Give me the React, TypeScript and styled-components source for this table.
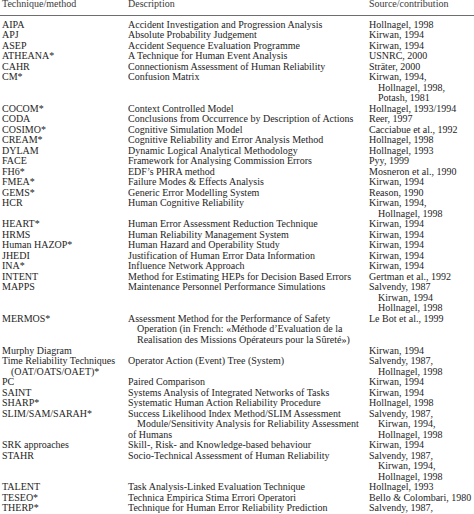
import styled, { createGlobalStyle } from 'styled-components';

const GlobalStyle = createGlobalStyle`
  html, body {
    margin: 0;
    padding: 0;
    background: #fff;
    overflow: hidden;
  }
`;

const Table = styled.div`
  width: 474px;
  height: 514px;
  overflow: hidden;
  font-family: "Liberation Serif", "Times New Roman", serif;
  font-size: 10px;
  line-height: 10.52px;
  color: #1e1e1e;
  white-space: nowrap;
`;

const Row = styled.div<{ $head?: boolean }>`
  display: grid;
  grid-template-columns: 126px 241px 1fr;
  padding-left: 2px;

  ${ p => p.$head && `
    margin-top: -1.5px;
    padding-bottom: 6px;
    margin-bottom: 3.5px;
    border-bottom: 1px solid #6e6e6e;
    color: #3a3a3a;
  ` }
`;

const Cell = styled.div`
  display: flex;
  flex-direction: column;
`;

const Line = styled.span<{ $indent?: boolean }>`
  display: block;
  padding-left: ${ p => p.$indent ? '9px' : '0' };
`;

// '>' in front of a line means it is a run-on line, set in a little
type Entry = [string[], string[], string[]];

const rows: Entry[] = [
  [['AIPA'], ['Accident Investigation and Progression Analysis'], ['Hollnagel, 1998']],
  [['APJ'], ['Absolute Probability Judgement'], ['Kirwan, 1994']],
  [['ASEP'], ['Accident Sequence Evaluation Programme'], ['Kirwan, 1994']],
  [['ATHEANA*'], ['A Technique for Human Event Analysis'], ['USNRC, 2000']],
  [['CAHR'], ['Connectionism Assessment of Human Reliability'], ['Sträter, 2000']],
  [['CM*'], ['Confusion Matrix'], ['Kirwan, 1994,', '>Hollnagel, 1998,', '>Potash, 1981']],
  [['COCOM*'], ['Context Controlled Model'], ['Hollnagel, 1993/1994']],
  [['CODA'], ['Conclusions from Occurrence by Description of Actions'], ['Reer, 1997']],
  [['COSIMO*'], ['Cognitive Simulation Model'], ['Cacciabue et al., 1992']],
  [['CREAM*'], ['Cognitive Reliability and Error Analysis Method'], ['Hollnagel, 1998']],
  [['DYLAM'], ['Dynamic Logical Analytical Methodology'], ['Hollnagel, 1993']],
  [['FACE'], ['Framework for Analysing Commission Errors'], ['Pyy, 1999']],
  [['FH6*'], ['EDF’s PHRA method'], ['Mosneron et al., 1990']],
  [['FMEA*'], ['Failure Modes & Effects Analysis'], ['Kirwan, 1994']],
  [['GEMS*'], ['Generic Error Modelling System'], ['Reason, 1990']],
  [['HCR'], ['Human Cognitive Reliability'], ['Kirwan, 1994,', '>Hollnagel, 1998']],
  [['HEART*'], ['Human Error Assessment Reduction Technique'], ['Kirwan, 1994']],
  [['HRMS'], ['Human Reliability Management System'], ['Kirwan, 1994']],
  [['Human HAZOP*'], ['Human Hazard and Operability Study'], ['Kirwan, 1994']],
  [['JHEDI'], ['Justification of Human Error Data Information'], ['Kirwan, 1994']],
  [['INA*'], ['Influence Network Approach'], ['Kirwan, 1994']],
  [['INTENT'], ['Method for Estimating HEPs for Decision Based Errors'], ['Gertman et al., 1992']],
  [['MAPPS'], ['Maintenance Personnel Performance Simulations'], ['Salvendy, 1987', '>Kirwan, 1994', '>Hollnagel, 1998']],
  [
    ['MERMOS*'],
    [
      'Assessment Method for the Performance of Safety',
      '>Operation (in French: «Méthode d’Evaluation de la',
      '>Realisation des Missions Opérateurs pour la Sûreté»)',
    ],
    ['Le Bot et al., 1999'],
  ],
  [['Murphy Diagram'], [], ['Kirwan, 1994']],
  [
    ['Time Reliability Techniques', '>(OAT/OATS/OAET)*'],
    ['Operator Action (Event) Tree (System)'],
    ['Salvendy, 1987,', '>Hollnagel, 1998'],
  ],
  [['PC'], ['Paired Comparison'], ['Kirwan, 1994']],
  [['SAINT'], ['Systems Analysis of Integrated Networks of Tasks'], ['Kirwan, 1994']],
  [['SHARP*'], ['Systematic Human Action Reliability Procedure'], ['Hollnagel, 1998']],
  [
    ['SLIM/SAM/SARAH*'],
    [
      'Success Likelihood Index Method/SLIM Assessment',
      '>Module/Sensitivity Analysis for Reliability Assessment',
      'of Humans',
    ],
    ['Salvendy, 1987,', '>Kirwan, 1994,', '>Hollnagel, 1998'],
  ],
  [['SRK approaches'], ['Skill-, Risk- and Knowledge-based behaviour'], ['Kirwan, 1994']],
  [['STAHR'], ['Socio-Technical Assessment of Human Reliability'], ['Salvendy, 1987,', '>Kirwan, 1994,', '>Hollnagel, 1998']],
  [['TALENT'], ['Task Analysis-Linked Evaluation Technique'], ['Hollnagel, 1993']],
  [['TESEO*'], ['Technica Empirica Stima Errori Operatori'], ['Bello & Colombari, 1980']],
  [['THERP*'], ['Technique for Human Error Reliability Prediction'], ['Salvendy, 1987,']],
];

function Lines({ lines }: { lines: string[] }) {
  return (
    <Cell>
      { lines.map((l, i) => (
        <Line key={ i } $indent={ l.startsWith('>') }>
          { l.replace(/^>/, '') }
        </Line>
      )) }
    </Cell>
  );
}

export default function App() {
  return (
    <>
      <GlobalStyle />
      <Table>
        <Row $head>
          <Cell>Technique/method</Cell>
          <Cell>Description</Cell>
          <Cell>Source/contribution</Cell>
        </Row>
        { rows.map(([tech, desc, src], i) => (
          <Row key={ i }>
            <Lines lines={ tech } />
            <Lines lines={ desc } />
            <Lines lines={ src } />
          </Row>
        )) }
      </Table>
    </>
  );
}
